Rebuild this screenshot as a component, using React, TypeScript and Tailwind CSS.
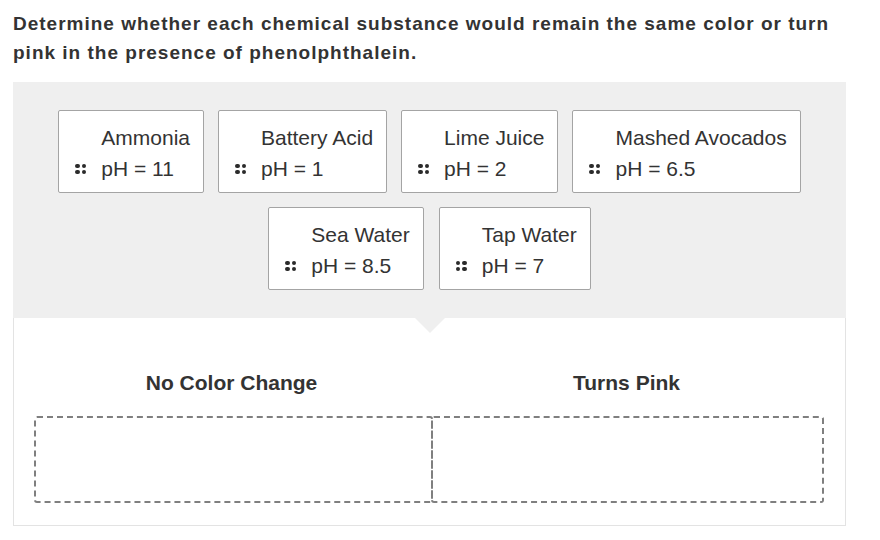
import React from 'react';

type Chem = { name: string; ph: string };

const rowOne: Chem[] = [
  { name: 'Ammonia', ph: '11' },
  { name: 'Battery Acid', ph: '1' },
  { name: 'Lime Juice', ph: '2' },
  { name: 'Mashed Avocados', ph: '6.5' },
];

const rowTwo: Chem[] = [
  { name: 'Sea Water', ph: '8.5' },
  { name: 'Tap Water', ph: '7' },
];

const Grip: React.FC = () => (
  <div className="grid grid-cols-2 gap-[2px] w-[11px] h-[10px] shrink-0">
    <span className="rounded-[2px] bg-[#2b2b2b]" />
    <span className="rounded-[2px] bg-[#2b2b2b]" />
    <span className="rounded-[2px] bg-[#2b2b2b]" />
    <span className="rounded-[2px] bg-[#2b2b2b]" />
  </div>
);

const Card: React.FC<{ item: Chem }> = ({ item }) => (
  <div className="bg-white border border-[#a4a4a4] rounded-[2px] pl-[16px] pr-[13px] pt-[11px] pb-[8px] text-[21px] leading-[31px] text-[#333]">
    <div className="pl-[26px]">{item.name}</div>
    <div className="flex items-center gap-[15px]">
      <Grip />
      <span>pH = {item.ph}</span>
    </div>
  </div>
);

const App: React.FC = () => {
  return (
    <div className="w-[880px] h-[540px] bg-white font-['Liberation_Sans',Arial,sans-serif]">
      <div className="ml-[13px] w-[833px] pt-[9px]">
        <h1 className="text-[19px] leading-[29px] font-bold tracking-[1px] text-[#333]">
          Determine whether each chemical substance would remain the same color or turn pink in the presence of phenolphthalein.
        </h1>

        <div className="relative mt-[15px] bg-[#efefef] py-[28px] flex flex-col items-center gap-[14px]">
          <div className="flex gap-[14px]">
            {rowOne.map((c) => (
              <Card key={c.name} item={c} />
            ))}
          </div>
          <div className="flex gap-[15px]">
            {rowTwo.map((c) => (
              <Card key={c.name} item={c} />
            ))}
          </div>
          <div className="absolute left-1/2 -translate-x-1/2 top-full w-0 h-0 border-x-[15px] border-x-transparent border-t-[15px] border-t-[#efefef]" />
        </div>

        <div className="border border-t-0 border-[#e3e3e3] pl-[20px] pr-[21px] pt-[51px] pb-[22px]">
          <div className="grid grid-cols-2">
            <h2 className="text-center text-[21px] leading-[28px] font-bold text-[#333]">No Color Change</h2>
            <h2 className="text-center text-[21px] leading-[28px] font-bold text-[#333]">Turns Pink</h2>
          </div>
          <div className="grid grid-cols-[399px_1fr] mt-[19px]">
            <div className="h-[87px] border-[2.5px] border-dashed border-[#7f7f7f] rounded-[3px]" />
            <div className="h-[87px] border-[2.5px] border-dashed border-[#7f7f7f] rounded-[3px] -ml-[2.5px]" />
          </div>
        </div>
      </div>
    </div>
  );
};

export default App;
